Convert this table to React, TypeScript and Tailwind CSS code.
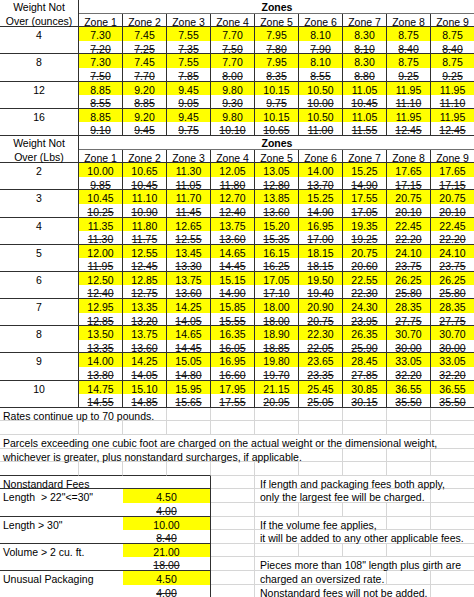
import React from 'react'

type Group = { w: string; now: string[]; was: string[] }

const ounces: Group[] = [
  { w: '4', now: ['7.30', '7.45', '7.55', '7.70', '7.95', '8.10', '8.30', '8.75', '8.75'], was: ['7.20', '7.25', '7.35', '7.50', '7.80', '7.90', '8.10', '8.40', '8.40'] },
  { w: '8', now: ['7.30', '7.45', '7.55', '7.70', '7.95', '8.10', '8.30', '8.75', '8.75'], was: ['7.50', '7.70', '7.85', '8.00', '8.35', '8.55', '8.80', '9.25', '9.25'] },
  { w: '12', now: ['8.85', '9.20', '9.45', '9.80', '10.15', '10.50', '11.05', '11.95', '11.95'], was: ['8.55', '8.85', '9.05', '9.30', '9.75', '10.00', '10.45', '11.10', '11.10'] },
  { w: '16', now: ['8.85', '9.20', '9.45', '9.80', '10.15', '10.50', '11.05', '11.95', '11.95'], was: ['9.10', '9.45', '9.75', '10.10', '10.65', '11.00', '11.55', '12.45', '12.45'] },
]

const pounds: Group[] = [
  { w: '2', now: ['10.00', '10.65', '11.30', '12.05', '13.05', '14.00', '15.25', '17.65', '17.65'], was: ['9.85', '10.45', '11.05', '11.80', '12.80', '13.70', '14.90', '17.15', '17.15'] },
  { w: '3', now: ['10.45', '11.10', '11.70', '12.70', '13.85', '15.25', '17.55', '20.75', '20.75'], was: ['10.25', '10.90', '11.45', '12.40', '13.60', '14.90', '17.05', '20.10', '20.10'] },
  { w: '4', now: ['11.35', '11.80', '12.65', '13.75', '15.20', '16.95', '19.35', '22.45', '22.45'], was: ['11.30', '11.75', '12.55', '13.60', '15.35', '17.00', '19.25', '22.20', '22.20'] },
  { w: '5', now: ['12.00', '12.55', '13.45', '14.65', '16.15', '18.15', '20.75', '24.10', '24.10'], was: ['11.95', '12.45', '13.30', '14.45', '16.25', '18.15', '20.60', '23.75', '23.75'] },
  { w: '6', now: ['12.50', '12.85', '13.75', '15.15', '17.05', '19.50', '22.55', '26.25', '26.25'], was: ['12.40', '12.75', '13.60', '14.90', '17.10', '19.40', '22.30', '25.80', '25.80'] },
  { w: '7', now: ['12.95', '13.35', '14.25', '15.85', '18.00', '20.90', '24.30', '28.35', '28.35'], was: ['12.85', '13.20', '14.05', '15.55', '18.00', '20.75', '23.95', '27.75', '27.75'] },
  { w: '8', now: ['13.50', '13.75', '14.65', '16.35', '18.90', '22.30', '26.35', '30.70', '30.70'], was: ['13.35', '13.60', '14.45', '16.05', '18.85', '22.05', '25.90', '30.00', '30.00'] },
  { w: '9', now: ['14.00', '14.25', '15.05', '16.95', '19.80', '23.65', '28.45', '33.05', '33.05'], was: ['13.80', '14.05', '14.80', '16.60', '19.70', '23.35', '27.85', '32.20', '32.20'] },
  { w: '10', now: ['14.75', '15.10', '15.95', '17.95', '21.15', '25.45', '30.85', '36.55', '36.55'], was: ['14.55', '14.85', '15.65', '17.55', '20.95', '25.05', '30.15', '35.50', '35.50'] },
]

const zones = [1, 2, 3, 4, 5, 6, 7, 8, 9]

// cell edges, excel style
const darkR = 'border-r border-r-[#303030]'
const darkB = 'border-b border-b-[#303030]'
const lightR = 'border-r border-r-[#d6d6d6]'
const lightB = 'border-b border-b-[#d6d6d6]'
const strike = 'line-through decoration-[#222]'

function RateTable({ unit, groups }: { unit: string; groups: Group[] }) {
  return (
    <>
      <div className={`row-span-2 flex flex-col items-center ${darkR} ${darkB}`}>
        <span className="h-[13.6px] leading-[14px]">Weight Not</span>
        <span className="h-[13.6px] leading-[14px]">Over ({unit})</span>
      </div>
      <div className="col-span-9 border-b border-b-[#707070] text-center font-bold leading-[14.5px]">
        Zones
      </div>
      {zones.map(z => (
        <div key={z} className={`text-center leading-[17px] ${darkR} ${darkB}`}>
          Zone {z}
        </div>
      ))}

      {groups.map(g => (
        <React.Fragment key={g.w}>
          <div className={`row-span-2 text-center leading-[16px] ${darkR} ${darkB}`}>{g.w}</div>
          {g.now.map((v, i) => (
            <div key={'n' + i} className={`bg-[#ffff00] text-center leading-[16px] ${darkR}`}>
              {v}
            </div>
          ))}
          {g.was.map((v, i) => (
            <div key={'w' + i} className={`text-center leading-[16px] ${darkR} ${darkB}`}>
              <span className={strike}>{v}</span>
            </div>
          ))}
        </React.Fragment>
      ))}
    </>
  )
}

function Grid({ n }: { n: number }) {
  return (
    <>
      {Array.from({ length: n }).map((_, i) => (
        <div key={i} className={`${lightR} ${lightB}`} />
      ))}
    </>
  )
}

function Txt({ span, children, pad = 'pl-[3px]' }: { span: string; children: React.ReactNode; pad?: string }) {
  return (
    <div className={`${span} ${pad} whitespace-pre leading-[16px] ${lightR} ${lightB}`}>{children}</div>
  )
}

function FeeLabel({ children }: { children?: React.ReactNode }) {
  return <div className="col-span-2 whitespace-pre pl-[3px] leading-[16px]">{children}</div>
}

function FeeNow({ v }: { v: string }) {
  return <div className={`col-span-2 bg-[#ffff00] text-center leading-[16px] ${darkR}`}>{v}</div>
}

function FeeWas({ v }: { v: string }) {
  return (
    <>
      <div className={`col-span-2 ${darkB}`} />
      <div className={`col-span-2 text-center leading-[16px] ${darkR} ${darkB}`}>
        <span className={strike}>{v}</span>
      </div>
    </>
  )
}

export default function App() {
  return (
    <div className="h-[597px] w-[474px] overflow-hidden bg-white text-black">
      <div
        className="grid w-[475px] grid-cols-[79px_repeat(9,minmax(0,1fr))] auto-rows-[13.6px] text-[10.5px]"
        style={{ fontFamily: '"Liberation Sans", Arial, sans-serif' }}
      >
        <RateTable unit="ounces" groups={ounces} />
        <RateTable unit="Lbs" groups={pounds} />

        {/* notes under the rate tables */}
        <Txt span="col-span-3">Rates continue up to 70 pounds.</Txt>
        <Grid n={7} />
        <Grid n={10} />
        <Txt span="col-span-10">
          Parcels exceeding one cubic foot are charged on the actual weight or the dimensional weight,
        </Txt>
        <Txt span="col-span-7">whichever is greater, plus nonstandard surcharges, if applicable.</Txt>
        <Grid n={3} />
        {[0, 1, 2, 3].map(i => (
          <div key={i} className={`${lightR} ${darkB}`} />
        ))}
        <Grid n={6} />

        {/* nonstandard fees */}
        <div className={`col-span-4 pl-[3px] leading-[16px] ${darkR} ${darkB}`}>Nonstandard Fees</div>
        <Grid n={1} />
        <Txt span="col-span-5" pad="pl-[5px]">If length and packaging fees both apply,</Txt>

        <FeeLabel>{'Length  > 22"<=30"'}</FeeLabel>
        <FeeNow v="4.50" />
        <Grid n={1} />
        <Txt span="col-span-4" pad="pl-[5px]">only the largest fee will be charged.</Txt>
        <Grid n={1} />

        <FeeWas v="4.00" />
        <Grid n={6} />

        <FeeLabel>{'Length > 30"'}</FeeLabel>
        <FeeNow v="10.00" />
        <Grid n={1} />
        <Txt span="col-span-3" pad="pl-[5px]">If the volume fee applies,</Txt>
        <Grid n={2} />

        <FeeWas v="8.40" />
        <Grid n={1} />
        <Txt span="col-span-5" pad="pl-[5px]">it will be added to any other applicable fees.</Txt>

        <FeeLabel>Volume &gt; 2 cu. ft.</FeeLabel>
        <FeeNow v="21.00" />
        <Grid n={6} />

        <FeeWas v="18.00" />
        <Grid n={1} />
        <Txt span="col-span-5" pad="pl-[5px]">{'Pieces more than 108" length plus girth are'}</Txt>

        <FeeLabel>Unusual Packaging</FeeLabel>
        <FeeNow v="4.50" />
        <Grid n={1} />
        <Txt span="col-span-3" pad="pl-[5px]">charged an oversized rate.</Txt>
        <Grid n={2} />

        <FeeWas v="4.00" />
        <Grid n={1} />
        <Txt span="col-span-4" pad="pl-[5px]">Nonstandard fees will not be added.</Txt>
        <Grid n={1} />
      </div>
    </div>
  )
}
